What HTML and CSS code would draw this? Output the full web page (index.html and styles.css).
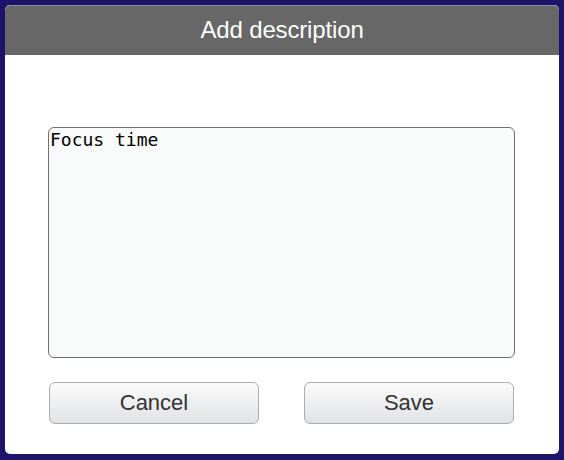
FILE: index.html
```html
<!DOCTYPE html>
<html>
<head>
<meta charset="utf-8">
<link rel="stylesheet" href="styles.css">
</head>
<body>
<div class="dialog">
  <div class="dialog-header">Add description</div>
  <div class="dialog-body">
    <textarea class="desc-input">Focus time</textarea>
    <div class="actions">
      <button class="btn">Cancel</button>
      <button class="btn">Save</button>
    </div>
  </div>
</div>
</body>
</html>
```
FILE: styles.css
```css
html, body {
  margin: 0;
  padding: 0;
}
body {
  background: #1d1368;
  width: 564px;
  height: 460px;
  padding: 5px;
  box-sizing: border-box;
  font-family: "Liberation Sans", Arial, sans-serif;
}
.dialog {
  width: 554px;
  height: 449px;
  background: #ffffff;
  border-radius: 5px;
  overflow: hidden;
  display: flex;
  flex-direction: column;
}
.dialog-header {
  height: 50px;
  box-sizing: border-box;
  background: #676767;
  border-top: 1px solid #8c8c8c;
  border-radius: 5px 5px 0 0;
  color: #ffffff;
  font-size: 24px;
  letter-spacing: -0.15px;
  line-height: 48px;
  text-align: center;
}
.dialog-body {
  display: flex;
  flex-direction: column;
  padding: 72px 44px 0 43px;
}
.desc-input {
  width: 467px;
  height: 231px;
  box-sizing: border-box;
  margin: 0;
  padding: 1px 1px;
  border: 1px solid #707070;
  border-radius: 6px;
  background: #f9fafa;
  font-family: "DejaVu Sans Mono", monospace;
  font-size: 18px;
  color: #000;
  resize: none;
  outline: none;
}
.actions {
  display: flex;
  gap: 45px;
  margin-top: 24px;
  padding-left: 1px;
}
.btn {
  width: 210px;
  height: 42px;
  box-sizing: border-box;
  border: 1px solid #adadad;
  border-radius: 6px;
  background: linear-gradient(to bottom, #fbfbfb, #e1e2e4);
  color: #333333;
  font-family: "Liberation Sans", Arial, sans-serif;
  font-size: 22px;
  padding: 0;
}
```
